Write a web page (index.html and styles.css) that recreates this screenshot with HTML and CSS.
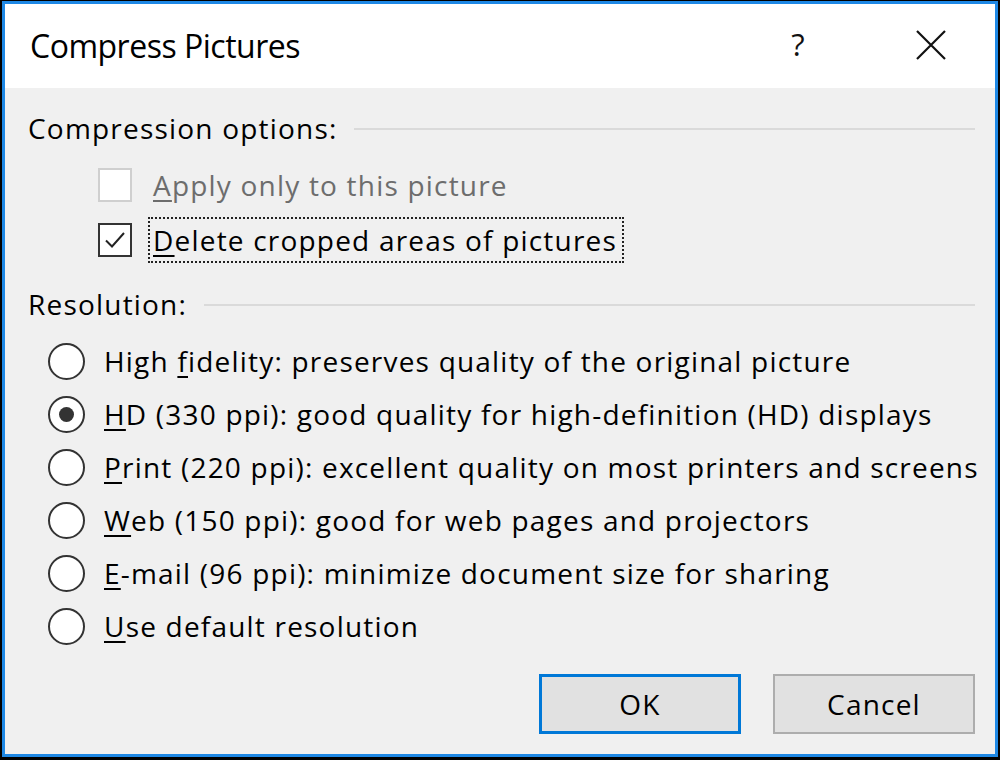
FILE: index.html
```html
<!doctype html>
<html>
<head>
	<meta charset="utf-8">
	<title>Compress Pictures</title>
	<link rel="stylesheet" href="styles.css">
</head>
<body>
	<div class="window">
		<header class="titlebar">
			<h1 class="titlebar__title">Compress Pictures</h1>
			<button class="titlebar__btn titlebar__help">?</button>
			<button class="titlebar__btn titlebar__close">
				<svg width="30" height="30" viewBox="0 0 30 30"><path d="M1 1 L29 29 M29 1 L1 29" stroke="#111" stroke-width="2.2" fill="none"/></svg>
			</button>
		</header>
		<div class="dialog">
			<div class="group">
				<div class="group__head"><span>Compression options:</span><i class="group__line"></i></div>
				<div class="group__body group__body--checks">
					<label class="check check--disabled">
						<span class="check__box"></span>
						<span class="check__text"><u>A</u>pply only to this picture</span>
					</label>
					<label class="check">
						<span class="check__box">
							<svg width="24" height="24" viewBox="0 0 24 24"><path d="M3 12.5 L9 18.5 L21 5" stroke="#222" stroke-width="2" fill="none"/></svg>
						</span>
						<span class="check__text check__text--focus"><u>D</u>elete cropped areas of pictures</span>
					</label>
				</div>
			</div>
			<div class="group">
				<div class="group__head"><span>Resolution:</span><i class="group__line"></i></div>
				<div class="group__body group__body--radios">
					<label class="radio"><span class="radio__dot"></span><span>High <u>f</u>idelity: preserves quality of the original picture</span></label>
					<label class="radio radio--on"><span class="radio__dot"></span><span><u>H</u>D (330 ppi): good quality for high-definition (HD) displays</span></label>
					<label class="radio"><span class="radio__dot"></span><span><u>P</u>rint (220 ppi): excellent quality on most printers and screens</span></label>
					<label class="radio"><span class="radio__dot"></span><span><u>W</u>eb (150 ppi): good for web pages and projectors</span></label>
					<label class="radio"><span class="radio__dot"></span><span><u>E</u>-mail (96 ppi): minimize document size for sharing</span></label>
					<label class="radio"><span class="radio__dot"></span><span><u>U</u>se default resolution</span></label>
				</div>
			</div>
			<div class="actions">
				<button class="btn btn--default">OK</button>
				<button class="btn">Cancel</button>
			</div>
		</div>
	</div>
</body>
</html>
```
FILE: styles.css
```css
*,*:before,*:after{box-sizing:border-box;margin:0;padding:0}
html,body{height:100%}
body{background:#000;padding:1px 2px 3px 2px;font-family:'Open Sans','Noto Sans',sans-serif;color:#000;overflow:hidden}
u{text-decoration:underline;text-decoration-thickness:2px;text-underline-offset:4px}

.window{height:756px;border:3px solid #1e88e5;display:flex;flex-direction:column;background:#f0f0f0}

.titlebar{height:84px;flex:none;background:#fff;display:flex;align-items:center;padding:0 0 0 25px}
.titlebar__title{flex:1;font-size:32px;font-weight:400;letter-spacing:-0.5px;color:#000;padding-bottom:2px}
.titlebar__btn{background:transparent;border:0;font-family:inherit;color:#111;display:flex;align-items:center;justify-content:center}
.titlebar__help{font-size:31px;width:24px;margin-right:106px;padding-bottom:4px}
.titlebar__close{width:30px;margin-right:49px;padding-bottom:2px}

.dialog{flex:1;display:flex;flex-direction:column;padding:22px 20px 0 23px;font-size:28px;letter-spacing:1.2px;white-space:nowrap}

.group__head{display:flex;align-items:center;gap:17px;height:36px}
.group__line{flex:1;height:2px;background:#dadada;margin-top:2px}

.group__body--checks{padding:21px 0 0 70px;display:flex;flex-direction:column;gap:19px;margin-bottom:28px}
.check{display:flex;align-items:center;gap:21px;height:36px}
.check__box{width:34px;height:34px;border:2px solid #333;background:#fff;display:flex;align-items:center;justify-content:center;flex:none}
.check--disabled .check__box{border-color:#cfcfcf}
.check--disabled .check__text{color:#6d6d6d}
.check__text{padding:3px 5px 3px 3px;margin-left:-5px;border:2px solid transparent;line-height:36px}
.check__text--focus{border:2px dotted #222}

.group__body--radios{padding:21px 0 0 20px;display:flex;flex-direction:column;gap:17px}
.radio{display:flex;align-items:center;gap:19px;height:36px}
.radio__dot{width:37px;height:37px;border:2px solid #333;border-radius:50%;background:#fff;flex:none;display:flex;align-items:center;justify-content:center}
.radio--on .radio__dot:after{content:"";width:15px;height:15px;border-radius:50%;background:#333}

.actions{margin-top:auto;margin-bottom:20px;display:flex;justify-content:flex-end;gap:32px}
.btn{width:202px;height:60px;background:#e1e1e1;border:2px solid #adadad;font-family:inherit;font-size:28px;letter-spacing:1.2px;color:#000}
.btn--default{border:3px solid #0078d7}
```
